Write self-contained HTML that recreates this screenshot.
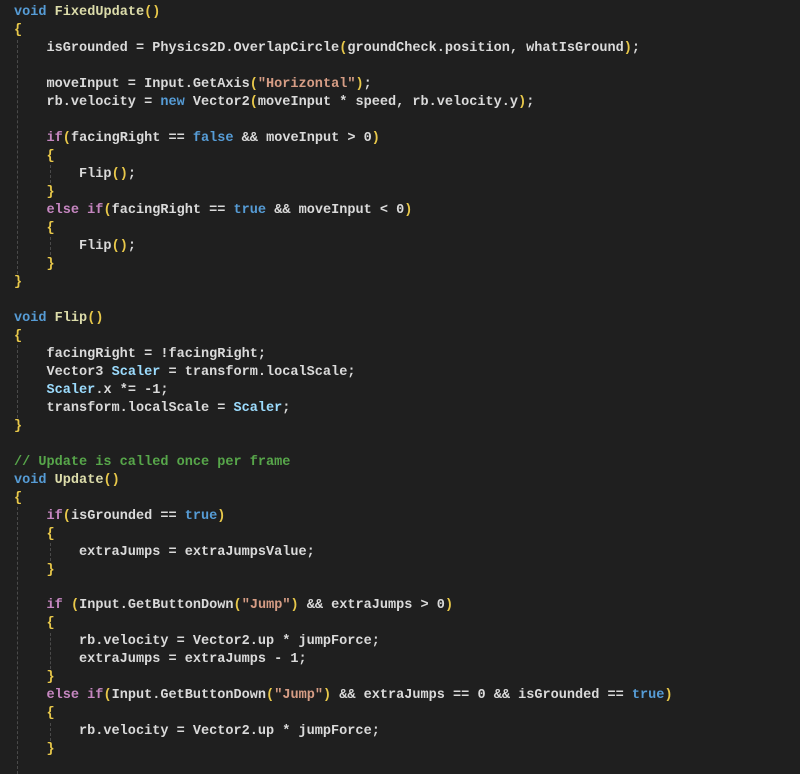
<!DOCTYPE html>
<html><head><meta charset="utf-8"><style>
html,body{margin:0;padding:0;background:#1f1f1f;width:800px;height:772px;overflow:hidden}
pre{position:absolute;left:14px;top:4px;margin:0;font-family:"Liberation Mono",monospace;font-size:13.55px;line-height:17.98px;color:#dadada;font-weight:bold;letter-spacing:0}
.k{color:#569cd6}.m{color:#dcdcaa}.b{color:#e8c84a}.c{color:#c586c0}.s{color:#d69d85}.g{color:#57a64a}.v{color:#9cdcfe}
.gd{position:absolute;width:0;border-left:1px dashed #4a4a4a}
</style></head><body>
<div class="gd" style="left:17px;top:40px;height:234px"></div>
<div class="gd" style="left:17px;top:345px;height:73px"></div>
<div class="gd" style="left:17px;top:507px;height:267px"></div>
<div class="gd" style="left:50px;top:165px;height:18px"></div>
<div class="gd" style="left:50px;top:237px;height:18px"></div>
<div class="gd" style="left:50px;top:543px;height:18px"></div>
<div class="gd" style="left:50px;top:633px;height:36px"></div>
<div class="gd" style="left:50px;top:723px;height:18px"></div>
<pre><span class="k">void</span> <span class="m">FixedUpdate</span><span class="b">()</span>
<span class="b">{</span>
    isGrounded = Physics2D.OverlapCircle<span class="b">(</span>groundCheck.position, whatIsGround<span class="b">)</span>;

    moveInput = Input.GetAxis<span class="b">(</span><span class="s">"Horizontal"</span><span class="b">)</span>;
    rb.velocity = <span class="k">new</span> Vector2<span class="b">(</span>moveInput * speed, rb.velocity.y<span class="b">)</span>;

    <span class="c">if</span><span class="b">(</span>facingRight == <span class="k">false</span> &amp;&amp; moveInput &gt; 0<span class="b">)</span>
    <span class="b">{</span>
        Flip<span class="b">()</span>;
    <span class="b">}</span>
    <span class="c">else if</span><span class="b">(</span>facingRight == <span class="k">true</span> &amp;&amp; moveInput &lt; 0<span class="b">)</span>
    <span class="b">{</span>
        Flip<span class="b">()</span>;
    <span class="b">}</span>
<span class="b">}</span>

<span class="k">void</span> <span class="m">Flip</span><span class="b">()</span>
<span class="b">{</span>
    facingRight = !facingRight;
    Vector3 <span class="v">Scaler</span> = transform.localScale;
    <span class="v">Scaler</span>.x *= -1;
    transform.localScale = <span class="v">Scaler</span>;
<span class="b">}</span>

<span class="g">// Update is called once per frame</span>
<span class="k">void</span> <span class="m">Update</span><span class="b">()</span>
<span class="b">{</span>
    <span class="c">if</span><span class="b">(</span>isGrounded == <span class="k">true</span><span class="b">)</span>
    <span class="b">{</span>
        extraJumps = extraJumpsValue;
    <span class="b">}</span>

    <span class="c">if</span> <span class="b">(</span>Input.GetButtonDown<span class="b">(</span><span class="s">"Jump"</span><span class="b">)</span> &amp;&amp; extraJumps &gt; 0<span class="b">)</span>
    <span class="b">{</span>
        rb.velocity = Vector2.up * jumpForce;
        extraJumps = extraJumps - 1;
    <span class="b">}</span>
    <span class="c">else if</span><span class="b">(</span>Input.GetButtonDown<span class="b">(</span><span class="s">"Jump"</span><span class="b">)</span> &amp;&amp; extraJumps == 0 &amp;&amp; isGrounded == <span class="k">true</span><span class="b">)</span>
    <span class="b">{</span>
        rb.velocity = Vector2.up * jumpForce;
    <span class="b">}</span>
</pre>
</body></html>
